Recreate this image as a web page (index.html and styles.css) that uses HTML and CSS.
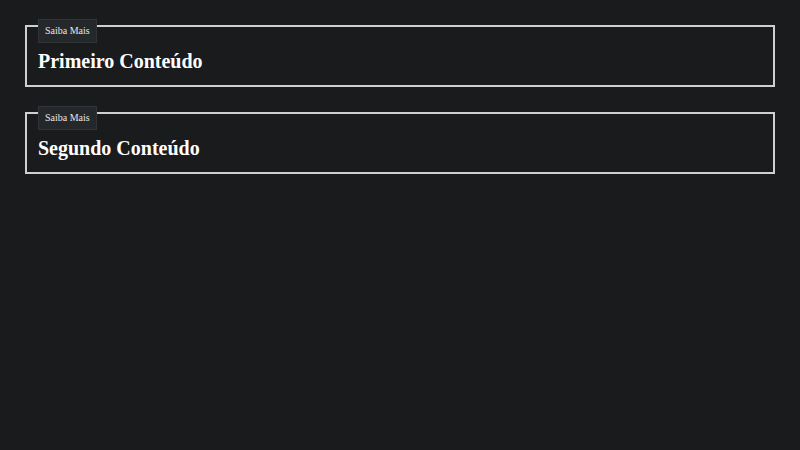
FILE: index.html
```html
<!DOCTYPE html>
<html lang="pt-BR">
<head>
  <meta charset="UTF-8">
  <meta name="viewport" content="width=device-width, initial-scale=1.0">
  <title>Conteúdos</title>
  <link rel="stylesheet" href="styles.css">
</head>
<body>

<main class="lista">
  <section class="caixa">
    <span class="selo">Saiba Mais</span>
    <h2>Primeiro Conteúdo</h2>
  </section>

  <section class="caixa">
    <span class="selo">Saiba Mais</span>
    <h2>Segundo Conteúdo</h2>
  </section>
</main>

</body>
</html>
```

FILE: styles.css
```css
body { font-family: "Liberation Serif", "Times New Roman", serif; background: #1a1b1d; color: #fff; margin: 0; padding: 0; }
.lista { display: flex; flex-direction: column; gap: 25px; padding: 25px; }
.caixa { position: relative; border: 2px solid #cfcfcf; padding: 23px 11px 12px; }
.caixa h2 { margin: 0; font-size: 20px; font-weight: bold; line-height: 23px; }
.selo { position: absolute; top: -8px; left: 11px; background: #25282b; border: 1px solid #303337; color: #e6e6e6; font-size: 10px; padding: 5px 6px; line-height: 12px; }
```
